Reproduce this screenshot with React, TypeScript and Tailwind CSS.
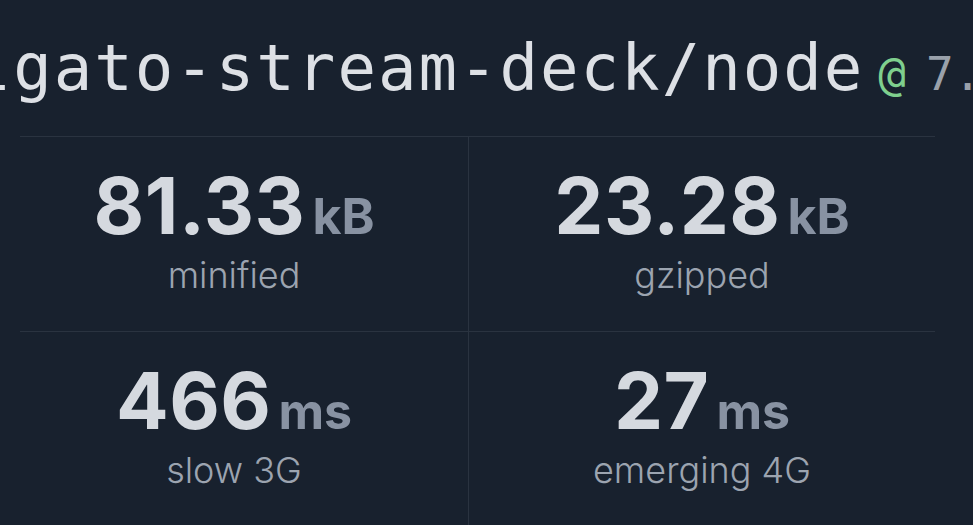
const stats = [
  [
    { value: "81.33", unit: "kB", label: "minified" },
    { value: "23.28", unit: "kB", label: "gzipped" },
  ],
  [
    { value: "466", unit: "ms", label: "slow 3G" },
    { value: "27", unit: "ms", label: "emerging 4G" },
  ],
];

function Stat({ value, unit, label }: { value: string; unit: string; label: string }) {
  return (
    <div className="flex flex-col items-center pt-[30px]">
      <div className="flex items-baseline leading-none">
        <span className="text-[78px] font-bold tracking-[0.5px] text-[#d5d9df]">{value}</span>
        <span className="ml-[7px] text-[50px] font-bold text-[#8892a2]">{unit}</span>
      </div>
      <div className="mt-3 text-[36px] font-light leading-none text-[#9ca4b0]">{label}</div>
    </div>
  );
}

export default function App() {
  return (
    <div className="h-[525px] w-[973px] overflow-hidden bg-[#18212e] font-['Inter',sans-serif]">
      {/* titre du paquet, déborde des deux côtés */}
      <div className="flex h-[100px] w-[956px] items-baseline justify-center whitespace-nowrap pt-[36px] font-['DejaVu_Sans_Mono',monospace] leading-none">
        <span className="text-[64px] tracking-[2px] text-[#dde0e5]">@elgato-stream-deck/node</span>
        <span className="ml-[14px] mr-[20px] text-[46px] text-[#7fcf8e]">@</span>
        <span className="text-[46px] text-[#9aa1ab]">7.1.2</span>
      </div>

      <div className="mt-9 ml-5 w-[915px]">
        {stats.map((row, i) => (
          <div key={i} className="grid h-[195px] grid-cols-[448px_467px] border-t border-[#2a3340]">
            <div className="pr-5">
              <Stat {...row[0]} />
            </div>
            <div className="border-l border-[#2a3340]">
              <Stat {...row[1]} />
            </div>
          </div>
        ))}
      </div>
    </div>
  );
}
